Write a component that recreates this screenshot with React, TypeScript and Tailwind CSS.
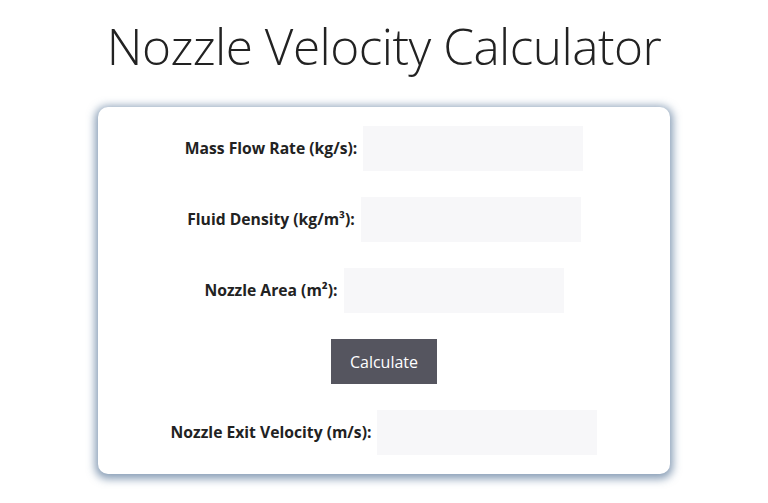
import React from 'react';

const fields = [
  { label: 'Mass Flow Rate (kg/s):', id: 'massFlow' },
  { label: 'Fluid Density (kg/m³):', id: 'density' },
  { label: 'Nozzle Area (m²):', id: 'area' },
];

function Row({ label, id }: { label: string; id: string }) {
  return (
    <div className="flex items-center justify-center gap-[6px]">
      <label htmlFor={id} className="text-[15.7px] font-bold text-[#222]">
        {label}
      </label>
      <input id={id} type="text" className="w-[220px] h-[45px] bg-[#f7f7f9] outline-none" />
    </div>
  );
}

export default function App() {
  return (
    <div
      className="min-h-[503px] bg-white flex flex-col items-center"
      style={{ fontFamily: '"Open Sans", "Liberation Sans", sans-serif' }}
    >
      <h1 className="mt-[14px] text-[49.5px] font-light text-[#222] leading-[64px] tracking-[-0.5px]">
        Nozzle Velocity Calculator
      </h1>
      <div className="mt-[29px] w-[572px] rounded-[10px] bg-white px-5 py-[19px] shadow-[0_2px_9px_3px_rgba(60,95,135,0.6)] flex flex-col gap-[26px]">
        {fields.map((f) => (
          <Row key={f.id} label={f.label} id={f.id} />
        ))}
        <div className="flex justify-center">
          <button className="w-[106px] h-[45px] bg-[#55555f] text-white text-[16px]">Calculate</button>
        </div>
        <Row label="Nozzle Exit Velocity (m/s):" id="velocity" />
      </div>
    </div>
  );
}
